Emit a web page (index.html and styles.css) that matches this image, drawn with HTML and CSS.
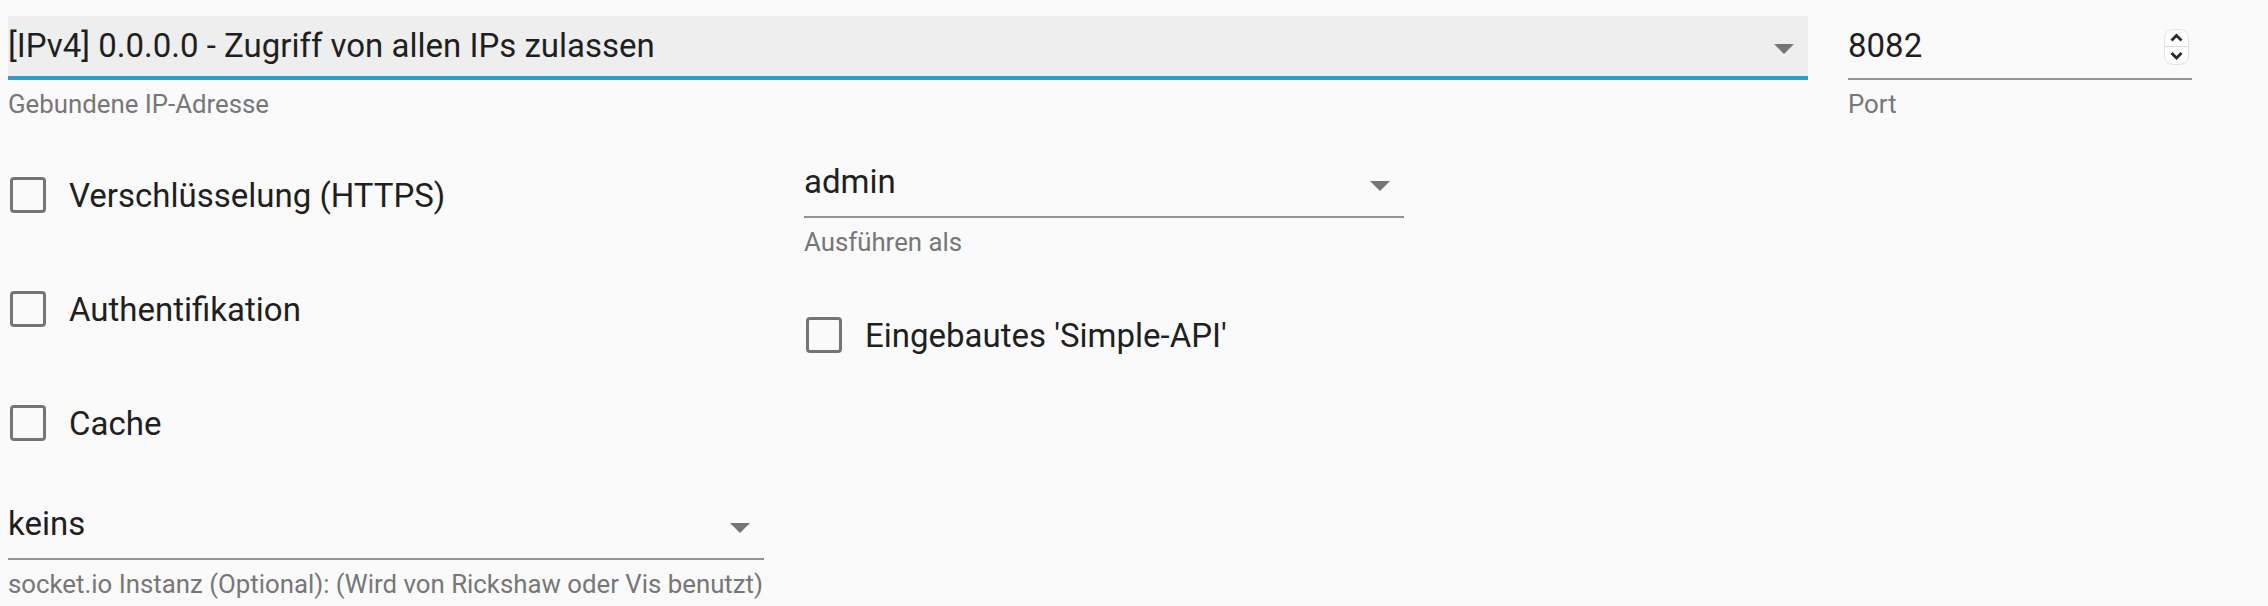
FILE: index.html
```html
<html>
<head>
	<meta charset="utf-8" />
	<link rel="stylesheet" href="styles.css">
</head>

<body>
	<div class="config">
		<div class="top-row">
			<div class="field bind">
				<div class="control filled">
					<span class="value">[IPv4] 0.0.0.0 - Zugriff von allen IPs zulassen</span>
					<span class="caret"></span>
				</div>
				<div class="helper">Gebundene IP-Adresse</div>
			</div>
			<div class="field port">
				<div class="control number">
					<span class="value">8082</span>
					<span class="spinner">
						<svg width="23" height="16" viewBox="0 0 23 16"><path d="M6.5 10.5 L11.5 5.5 L16.5 10.5" /></svg>
						<svg width="23" height="16" viewBox="0 0 23 16"><path d="M6.5 5.5 L11.5 10.5 L16.5 5.5" /></svg>
					</span>
				</div>
				<div class="helper">Port</div>
			</div>
		</div>

		<div class="columns">
			<div class="col left">
				<label class="check"><span class="box"></span><span>Verschlüsselung (HTTPS)</span></label>
				<label class="check"><span class="box"></span><span>Authentifikation</span></label>
				<label class="check"><span class="box"></span><span>Cache</span></label>
				<div class="field padded">
					<div class="control">
						<span class="value">keins</span>
						<span class="caret"></span>
					</div>
					<div class="helper">socket.io Instanz (Optional): (Wird von Rickshaw oder Vis benutzt)</div>
				</div>
			</div>
			<div class="col right">
				<div class="field padded">
					<div class="control">
						<span class="value">admin</span>
						<span class="caret"></span>
					</div>
					<div class="helper">Ausführen als</div>
				</div>
				<label class="check simple"><span class="box"></span><span>Eingebautes 'Simple-API'</span></label>
			</div>
		</div>
	</div>
</body>
</html>
```

FILE: styles.css
```css
body {
	margin: 0;
	padding: 0;
	background: #fafafa;
	color: #1f1f1f;
	font-family: Roboto, "Noto Sans", sans-serif;
}
.config {
	padding: 16px 8px 0 8px;
}
.top-row {
	display: flex;
	gap: 40px;
}
.field {
	display: flex;
	flex-direction: column;
}
.field.bind {
	width: 1800px;
}
.field.port {
	width: 344px;
}
.field.padded {
	padding-top: 18px;
}
.control {
	display: flex;
	align-items: center;
	height: 60px;
	border-bottom: 2px solid #949494;
	font-size: 33px;
}
.control .value {
	flex: 1;
	line-height: 52px;
	padding-bottom: 8px;
}
.control.filled {
	background: #eeeeee;
	border-bottom: 4px solid #3399cc;
}
.control.filled .value {
	line-height: 60px;
	padding-bottom: 0;
}
.control.number {
	height: 62px;
}
.control.number .value {
	line-height: 60px;
	padding-bottom: 2px;
}
.caret {
	width: 0;
	height: 0;
	border-left: 10px solid transparent;
	border-right: 10px solid transparent;
	border-top: 10px solid #757575;
	margin-right: 14px;
}
.filled .caret {
	margin-top: 5px;
}
.spinner {
	display: flex;
	flex-direction: column;
	width: 23px;
	height: 34px;
	margin-right: 4px;
	background: #ffffff;
	border-radius: 8px;
	box-shadow: 0 0 0 1px #e2e2e2;
}
.spinner svg {
	display: block;
	height: 17px;
}
.spinner svg:first-child {
	border-bottom: 1px solid #dcdcdc;
	height: 16px;
}
.spinner path {
	fill: none;
	stroke: #2a2a2a;
	stroke-width: 2.8;
}
.helper {
	margin-top: 8px;
	font-size: 25.8px;
	line-height: 32px;
	color: #777777;
	white-space: nowrap;
}
.columns {
	display: flex;
	gap: 40px;
	margin-top: 18px;
}
.col {
	display: flex;
	flex-direction: column;
}
.col.left {
	width: 756px;
}
.col.right {
	width: 600px;
}
.check {
	display: flex;
	align-items: center;
	height: 114px;
	font-size: 33px;
	user-select: none;
}
.check.simple {
	margin-top: 20px;
}
.box {
	box-sizing: border-box;
	width: 36px;
	height: 36px;
	margin-left: 2px;
	margin-right: 23px;
	border: 3px solid #757575;
	border-radius: 4px;
}
```
